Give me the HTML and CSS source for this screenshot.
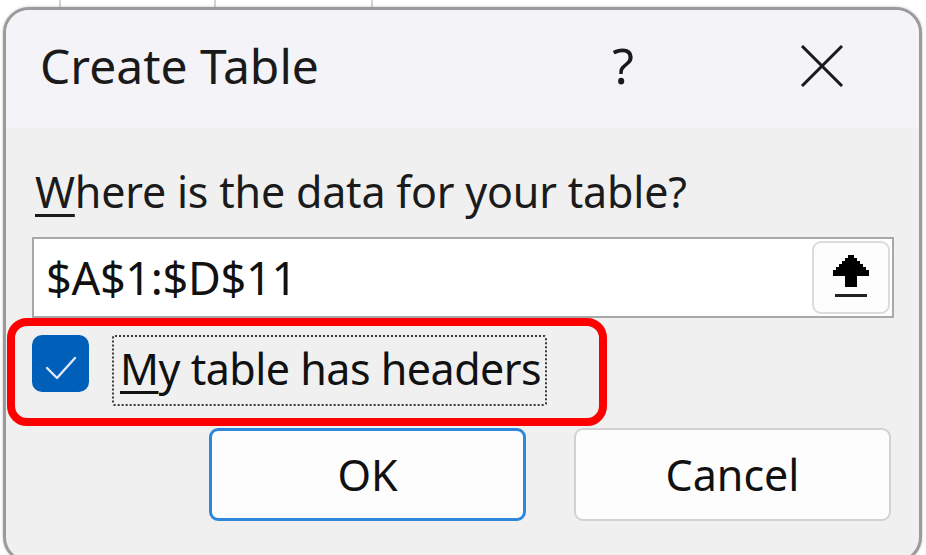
FILE: index.html
```html
<!DOCTYPE html>
<html lang="en">
<head>
<meta charset="utf-8">
<title>Create Table</title>
<link rel="stylesheet" href="styles.css">
</head>
<body>
<div class="dialog">
  <div class="titlebar">
    <div class="title">Create Table</div>
    <div class="help">?</div>
    <div class="close">
      <svg width="44" height="42" viewBox="0 0 44 42"><path d="M2 1 L42 41 M42 1 L2 41" stroke="#1a1a1a" stroke-width="3" fill="none"/></svg>
    </div>
  </div>
  <div class="content">
    <div class="label"><span class="ul">W</span>here is the data for your table?</div>
    <div class="range">
      <div class="range-text">$A$1:$D$11</div>
      <div class="collapse">
        <svg width="38" height="46" viewBox="0 0 38 46"><path d="M16 0 L22 0 L22 3 L25 3 L25 6 L28 6 L28 9 L31 9 L31 12 L34 12 L34 15 L37 15 L37 21 L25 21 L25 32 L13 32 L13 21 L1 21 L1 15 L4 15 L4 12 L7 12 L7 9 L10 9 L10 6 L13 6 L13 3 L16 3 Z" fill="#000"/><rect x="3" y="39" width="32" height="3" fill="#222"/></svg>
      </div>
    </div>
    <div class="check-row">
      <div class="checkbox">
        <svg width="57" height="57" viewBox="0 0 57 57"><path d="M15 33 L25 43 L43 23" stroke="#dfe9f6" stroke-width="2.4" fill="none" stroke-linecap="round" stroke-linejoin="round"/></svg>
      </div>
      <div class="check-label"><span class="ul">M</span>y table has headers</div>
    </div>
    <div class="buttons">
      <div class="btn btn-default">OK</div>
      <div class="btn">Cancel</div>
    </div>
  </div>
  <div class="highlight"></div>
</div>
</body>
</html>
```

FILE: styles.css
```css
html, body {
  margin: 0;
  padding: 0;
}
body {
  width: 926px;
  height: 555px;
  overflow: hidden;
  box-sizing: border-box;
  padding: 7px 4px 0 3px;
  background-color: #ffffff;
  background-image:
    linear-gradient(to right, transparent 59px, #d4d4d4 59px, #d4d4d4 61px, transparent 61px),
    linear-gradient(to right, transparent 214px, #d4d4d4 214px, #d4d4d4 216px, transparent 216px),
    linear-gradient(to right, transparent 371px, #d4d4d4 371px, #d4d4d4 373px, transparent 373px);
  font-family: "Noto Sans", "Open Sans", sans-serif;
  color: #1b1b1b;
}
.dialog {
  position: relative;
  height: 556px;
  box-sizing: border-box;
  border: 3px solid #9b9b9b;
  border-radius: 26px;
  background: #f0f0f0;
  overflow: hidden;
  display: flex;
  flex-direction: column;
  box-shadow: 0 0 3px rgba(0,0,0,0.25);
}
.titlebar {
  height: 118px;
  flex: none;
  background: #f3f3f8;
  display: flex;
  align-items: center;
  padding-left: 34px;
  padding-right: 75px;
}
.title {
  flex: 1;
  font-size: 48px;
  letter-spacing: 0;
  color: #1a1a1a;
  margin-top: -8px;
}
.help {
  font-size: 50px;
  color: #1a1a1a;
  margin-right: 166px;
  margin-top: -8px;
}
.close {
  display: flex;
  margin-top: -6px;
}
.content {
  flex: 1;
  padding: 0 25px 0 26px;
  display: flex;
  flex-direction: column;
}
.label {
  font-size: 43px;
  line-height: 48px;
  letter-spacing: -0.2px;
  margin-top: 40px;
  margin-left: 3px;
}
.ul {
  text-decoration: underline;
  text-decoration-thickness: 3px;
  text-underline-offset: 6px;
}
.range {
  margin-top: 21px;
  height: 81px;
  box-sizing: border-box;
  border: 2px solid #a8a8a8;
  background: #ffffff;
  display: flex;
  align-items: center;
  padding: 0 2px 0 12px;
}
.range-text {
  flex: 1;
  font-size: 45px;
  color: #111;
  letter-spacing: -0.3px;
}
.collapse {
  width: 78px;
  height: 73px;
  box-sizing: border-box;
  border: 2px solid #dcdcdc;
  border-radius: 9px;
  background: #fdfdfd;
  display: flex;
  align-items: center;
  justify-content: center;
}
.check-row {
  margin-top: 17px;
  display: flex;
  align-items: center;
  height: 71px;
}
.checkbox {
  width: 57px;
  height: 57px;
  border-radius: 10px;
  background: #005fb8;
  display: flex;
  align-self: flex-start;
}
.check-label {
  margin-left: 23px;
  height: 71px;
  box-sizing: border-box;
  border: 2px dotted #3a3a3a;
  border-radius: 3px;
  padding: 0 4px 0 6px;
  font-size: 43px;
  line-height: 64px;
  letter-spacing: -0.5px;
  color: #111;
}
.buttons {
  margin-top: 22px;
  display: flex;
  justify-content: flex-end;
  gap: 48px;
  padding-right: 3px;
}
.btn {
  width: 317px;
  height: 93px;
  box-sizing: border-box;
  border: 2px solid #d2d2d2;
  border-radius: 9px;
  background: #fdfdfd;
  font-size: 43px;
  color: #111;
  display: flex;
  align-items: center;
  justify-content: center;
}
.btn-default {
  border: 3px solid #2f86dd;
}
.highlight {
  position: absolute;
  left: 1px;
  top: 308px;
  width: 600px;
  height: 108px;
  box-sizing: border-box;
  border: 8px solid #ff0000;
  border-radius: 20px;
  pointer-events: none;
}
```
